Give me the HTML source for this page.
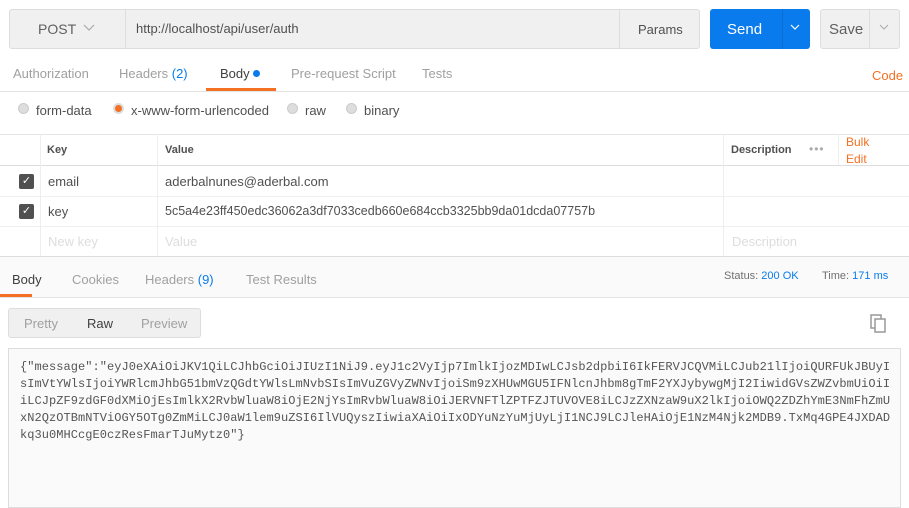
<!DOCTYPE html>
<html><head><meta charset="utf-8"><style>
*{box-sizing:border-box;margin:0;padding:0}
body{width:909px;height:497px;overflow:hidden;background:#fff;font-family:"Liberation Sans",sans-serif;font-size:13px;color:#505050;position:relative}
.a{position:absolute}
.g{color:#a0a0a0}
.bl{color:#097bed}
.or{color:#f47023}
.cb{position:absolute;width:15px;height:15px;background:#505050;border-radius:2px;color:#fff;font-size:11px;line-height:15px;text-align:center}
.rad{position:absolute;width:11px;height:11px;border-radius:50%;background:#ddd;border:1px solid #ccc}
.hl{position:absolute;left:0;width:909px;height:1px;background:#e4e4e4}
.vl{position:absolute;width:1px;background:#eee}
</style></head><body>
<div class="a" style="left:9px;top:9px;width:691px;height:40px;background:#f0f0f0;border:1px solid #ddd;border-radius:3px"></div>
<div class="a" style="left:125px;top:10px;width:1px;height:38px;background:#ddd"></div>
<div class="a" style="left:619px;top:10px;width:1px;height:38px;background:#ddd"></div>
<div class="a" style="left:38px;top:21px;font-size:14px;color:#606060">POST</div>
<svg class="a" style="left:83px;top:24px" width="12" height="8"><path d="M1 1l5 5 5-5" stroke="#aaa" fill="none" stroke-width="1.2"/></svg>
<div class="a" style="left:136px;top:21px;color:#505050">http://localhost/api/user/auth</div>
<div class="a" style="left:638px;top:22px;color:#505050">Params</div>
<div class="a" style="left:710px;top:9px;width:100px;height:40px;background:#097bed;border-radius:3px"></div>
<div class="a" style="left:782px;top:9px;width:1px;height:40px;background:#0a6fd4"></div>
<div class="a" style="left:727px;top:21px;color:#fff;font-size:15px">Send</div>
<svg class="a" style="left:790px;top:24px" width="10" height="7"><path d="M1 1l4 4 4-4" stroke="#fff" fill="none" stroke-width="1.2"/></svg>
<div class="a" style="left:820px;top:9px;width:80px;height:40px;background:#f0f0f0;border:1px solid #ddd;border-radius:3px"></div>
<div class="a" style="left:869px;top:10px;width:1px;height:38px;background:#ddd"></div>
<div class="a" style="left:829px;top:21px;font-size:15px;color:#606060">Save</div>
<svg class="a" style="left:879px;top:24px" width="10" height="7"><path d="M1 1l4 4 4-4" stroke="#aaa" fill="none" stroke-width="1"/></svg>
<div class="a g" style="left:13px;top:66px">Authorization</div>
<div class="a g" style="left:119px;top:66px">Headers <span class="bl">(2)</span></div>
<div class="a" style="left:220px;top:66px;color:#404040">Body</div>
<div class="a" style="left:253px;top:70px;width:7px;height:7px;border-radius:50%;background:#097bed"></div>
<div class="a g" style="left:291px;top:66px">Pre-request Script</div>
<div class="a g" style="left:422px;top:66px">Tests</div>
<div class="a or" style="left:872px;top:68px">Code</div>
<div class="a" style="left:206px;top:88px;width:70px;height:3px;background:#f47023"></div>
<div class="hl" style="top:91px"></div>
<div class="rad" style="left:18px;top:103px"></div><div class="a" style="left:36px;top:103px">form-data</div>
<div class="rad" style="left:113px;top:103px;background:#f47023;border:2px solid #ddd"></div><div class="a" style="left:131px;top:103px">x-www-form-urlencoded</div>
<div class="rad" style="left:287px;top:103px"></div><div class="a" style="left:305px;top:103px">raw</div>
<div class="rad" style="left:346px;top:103px"></div><div class="a" style="left:364px;top:103px">binary</div>
<div class="hl" style="top:134px"></div>
<div class="hl" style="top:165px;background:#ddd"></div>
<div class="hl" style="top:196px;background:#f0f0f0"></div>
<div class="hl" style="top:226px;background:#f0f0f0"></div>
<div class="hl" style="top:256px;background:#ddd"></div>
<div class="vl" style="left:40px;top:134px;height:122px"></div>
<div class="vl" style="left:157px;top:134px;height:122px"></div>
<div class="vl" style="left:723px;top:134px;height:122px"></div>
<div class="vl" style="left:838px;top:134px;height:31px"></div>
<div class="a" style="left:47px;top:144px;font-size:11px;font-weight:bold;color:#505050">Key</div>
<div class="a" style="left:165px;top:144px;font-size:11px;font-weight:bold;color:#505050">Value</div>
<div class="a" style="left:731px;top:144px;font-size:11px;font-weight:bold;color:#505050">Description</div>
<div class="a" style="left:809px;top:142px;color:#aaa;font-size:12px;letter-spacing:1px">•••</div>
<div class="a or" style="left:846px;top:134px;font-size:12px;line-height:17px">Bulk<br>Edit</div>
<div class="cb" style="left:19px;top:174px">✓</div>
<div class="a" style="left:48px;top:174px">email</div>
<div class="a" style="left:165px;top:174px">aderbalnunes@aderbal.com</div>
<div class="cb" style="left:19px;top:204px">✓</div>
<div class="a" style="left:48px;top:204px">key</div>
<div class="a" style="left:165px;top:204px;font-size:12.5px">5c5a4e23ff450edc36062a3df7033cedb660e684ccb3325bb9da01dcda07757b</div>
<div class="a" style="left:48px;top:234px;color:#ddd">New key</div>
<div class="a" style="left:165px;top:234px;color:#ddd">Value</div>
<div class="a" style="left:732px;top:234px;color:#ddd">Description</div>
<div class="a" style="left:0;top:257px;width:909px;height:40px;background:#fafafa"></div>
<div class="a" style="left:12px;top:272px;color:#404040">Body</div>
<div class="a g" style="left:72px;top:272px">Cookies</div>
<div class="a g" style="left:145px;top:272px">Headers <span class="bl">(9)</span></div>
<div class="a g" style="left:246px;top:272px">Test Results</div>
<div class="a" style="left:724px;top:270px;font-size:11px;color:#707070">Status: <span class="bl">200 OK</span></div>
<div class="a" style="left:822px;top:270px;font-size:11px;color:#707070">Time: <span class="bl">171 ms</span></div>
<div class="a" style="left:0;top:294px;width:32px;height:3px;background:#f47023"></div>
<div class="hl" style="top:297px"></div>
<div class="a" style="left:8px;top:308px;width:193px;height:30px;background:#f0f0f0;border:1px solid #ddd;border-radius:3px"></div>
<div class="a g" style="left:24px;top:316px">Pretty</div>
<div class="a" style="left:87px;top:316px;color:#404040">Raw</div>
<div class="a g" style="left:141px;top:316px">Preview</div>
<svg class="a" style="left:870px;top:314px" width="20" height="20"><rect x="1" y="1" width="10" height="13" fill="none" stroke="#999" stroke-width="1.5"/><rect x="5" y="5" width="10" height="13" fill="#fff" stroke="#999" stroke-width="1.5"/></svg>
<div class="a" style="left:8px;top:348px;width:893px;height:160px;background:#fafafa;border:1px solid #ddd"></div>
<div class="a" style="left:20px;top:359px;font-family:'Liberation Mono',monospace;font-size:12px;line-height:17px;color:#555;white-space:pre;letter-spacing:0.05px">{"message":"eyJ0eXAiOiJKV1QiLCJhbGciOiJIUzI1NiJ9.eyJ1c2VyIjp7ImlkIjozMDIwLCJsb2dpbiI6IkFERVJCQVMiLCJub21lIjoiQURFUkJBUyI
sImVtYWlsIjoiYWRlcmJhbG51bmVzQGdtYWlsLmNvbSIsImVuZGVyZWNvIjoiSm9zXHUwMGU5IFNlcnJhbm8gTmF2YXJybywgMjI2IiwidGVsZWZvbmUiOiI
iLCJpZF9zdGF0dXMiOjEsImlkX2RvbWluaW8iOjE2NjYsImRvbWluaW8iOiJERVNFTlZPTFZJTUVOVE8iLCJzZXNzaW9uX2lkIjoiOWQ2ZDZhYmE3NmFhZmU
xN2QzOTBmNTViOGY5OTg0ZmMiLCJ0aW1lem9uZSI6IlVUQyszIiwiaXAiOiIxODYuNzYuMjUyLjI1NCJ9LCJleHAiOjE1NzM4Njk2MDB9.TxMq4GPE4JXDAD
kq3u0MHCcgE0czResFmarTJuMytz0"}</div>
</body></html>
